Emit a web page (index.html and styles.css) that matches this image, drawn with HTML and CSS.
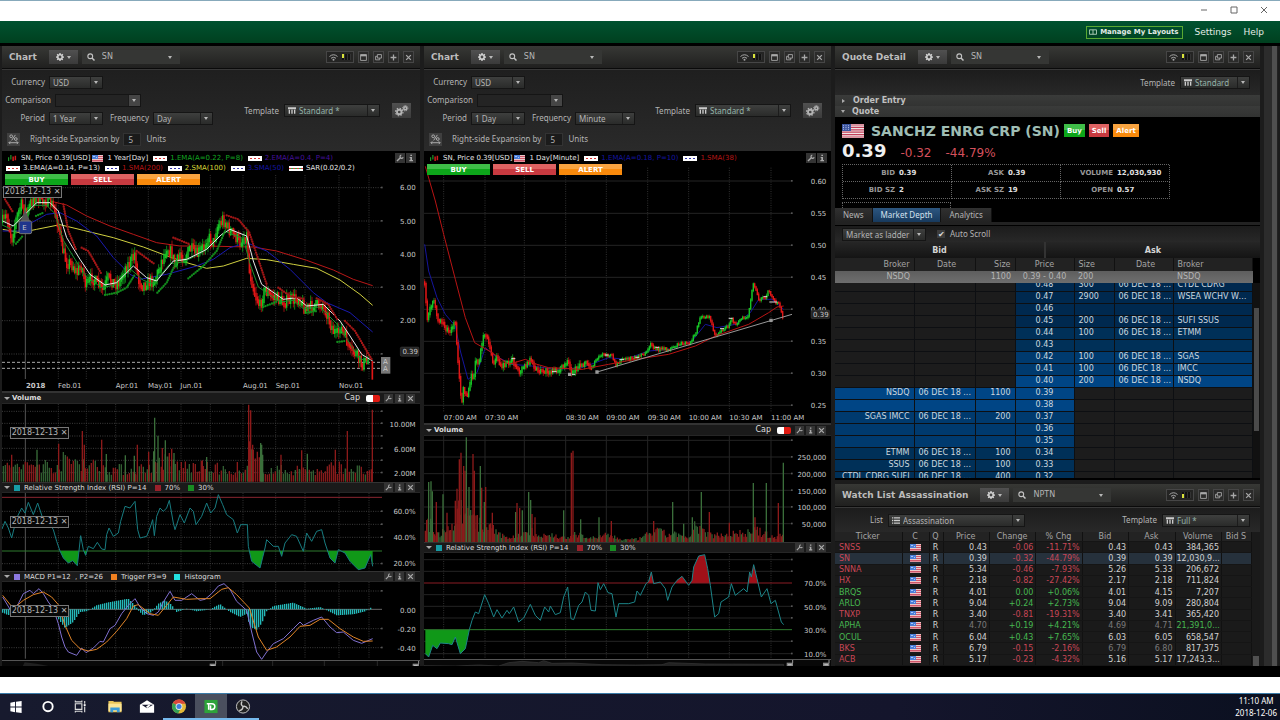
FILE: index.html
```html
<!DOCTYPE html>
<html lang="en">
  <head>
    <meta charset="utf-8">
    <title>Advanced Dashboard</title>
    <link rel="stylesheet" href="styles.css">
  </head>

  <body>
    <svg class="defs">
      <symbol id="i-gear" viewBox="0 0 16 16"><path fill="currentColor" fill-rule="evenodd" d="M6.8 0h2.4l.4 2.2 1.6.7L13 1.6 14.6 3.3l-1.3 1.8.6 1.5 2.1.4v2.3l-2.1.4-.7 1.6 1.3 1.8-1.7 1.6-1.7-1.2-1.6.6L9.200 16H6.800l-.4-1.900-1.600-.6L3 14.700 1.400 13.100l1.200-1.800-.6-1.600L0 9.300V7l2.100-.4.600-1.500L1.400 3.300 3 1.600l1.800 1.300 1.600-.7zM8 5.200a2.800 2.800 0 1 0 0 5.600 2.800 2.800 0 0 0 0-5.600z"/></symbol>
      <symbol id="i-search" viewBox="0 0 16 16"><g fill="none" stroke="currentColor" stroke-width="2.200"><circle cx="6.500" cy="6.500" r="4.800"/><path d="M10 10l5 5" stroke-width="3"/></g></symbol>
      <symbol id="i-wifi" viewBox="0 0 18 14"><g fill="none" stroke="currentColor" stroke-width="2"><path d="M1 5q8-7 16 0M4 8.500q5-4 10 0"/></g><circle cx="9" cy="11.500" r="2" fill="currentColor"/></symbol>
      <symbol id="i-min" viewBox="0 0 12 12"><path fill="none" stroke="currentColor" stroke-width="1.500" d="M1 1h10v10H1z"/><path fill="currentColor" d="M1 1h10v3H1z"/></symbol>
      <symbol id="i-pop" viewBox="0 0 12 12"><path fill="none" stroke="currentColor" stroke-width="1.500" d="M4 1h7v6H4zM4 4H1v6h7V7"/></symbol>
      <symbol id="i-plus" viewBox="0 0 12 12"><path fill="none" stroke="currentColor" stroke-width="2.200" d="M6 1v10M1 6h10"/></symbol>
      <symbol id="i-close" viewBox="0 0 12 12"><path fill="none" stroke="currentColor" stroke-width="2.200" d="M2 2l8 8M10 2l-8 8"/></symbol>
      <symbol id="i-gears" viewBox="0 0 20 16"><g fill="none" stroke="currentColor"><circle cx="7" cy="10" r="3" stroke-width="2.500"/><circle cx="7" cy="10" r="5" stroke-width="1.500" stroke-dasharray="2 1.900"/><circle cx="15" cy="5" r="2" stroke-width="2"/><circle cx="15" cy="5" r="3.500" stroke-width="1.300" stroke-dasharray="1.500 1.200"/></g></symbol>
      <symbol id="i-cols" viewBox="0 0 12 10"><path fill="currentColor" d="M0 0h12v3H0zM1 4h2v6H1zM5 4h2v6H5zM9 4h2v6H9z"/></symbol>
      <symbol id="i-list" viewBox="0 0 12 10"><path fill="currentColor" d="M0 0h2v2H0zM3 0h9v2H3zM0 4h2v2H0zM3 4h9v2H3zM0 8h2v2H0zM3 8h9v2H3z"/></symbol>
      <symbol id="i-pct" viewBox="0 0 12 12"><g fill="none" stroke="currentColor"><circle cx="3.500" cy="2.500" r="1.500"/><circle cx="8.500" cy="5.500" r="1.500"/><path d="M8 1L4 7M1 9.500h10M2.500 8L1 9.500 2.500 11M9.500 8L11 9.500 9.500 11"/></g></symbol>
      <symbol id="i-wrench" viewBox="0 0 12 12"><path fill="none" stroke="currentColor" stroke-width="2" d="M1.500 10.500l5-5"/><path fill="none" stroke="currentColor" stroke-width="1.800" d="M8 1.500a2.500 2.500 0 1 0 2.800 3.500"/></symbol>
      <symbol id="i-info" viewBox="0 0 12 12"><path fill="currentColor" d="M5 1h2.500v2H5zM4 4.500h3.500V9H9v2H3.500V9H5V6H4z"/></symbol>
      <symbol id="i-candle" viewBox="0 0 12 8"><path fill="none" stroke="#1e9d2a" stroke-width="1.500" d="M1.500 3v5M4.500 0v6"/><path fill="none" stroke="#d01c1c" stroke-width="2" d="M7.500 2v6M10.500 1v6"/></symbol>
      <symbol id="flag" viewBox="0 0 22 14" preserveAspectRatio="none"><path fill="#f1e6e6" d="M0 0h22v14H0z"/><path stroke="#c2405a" stroke-width="1.200" d="M0 1h22M0 3.400h22M0 5.800h22M0 8.200h22M0 10.600h22M0 13h22"/><path fill="#3b55a0" d="M0 0h9v7H0z"/><path stroke="#c8d2f0" stroke-width=".8" stroke-dasharray="1 1.500" d="M1 1.700h7M1 3.500h7M1 5.300h7"/></symbol>
      <symbol id="flag-sm" viewBox="0 0 11 7" preserveAspectRatio="none"><path fill="#eccaca" d="M0 0h11v7H0z"/><path stroke="#d0566a" d="M0 1.500h11M0 3.500h11M0 5.500h11M0 7h11"/><path fill="#4c7fd8" d="M0 0h6v4H0z"/><path fill="#a8c8f8" d="M1 1h2v1H1zM4 2h1v1H4z"/></symbol>
    </svg>

    <div class="titlebar">
      <button aria-label="Minimize"><svg viewBox="0 0 8 8"><path d="M1 4h6"/></svg></button>
      <button aria-label="Maximize"><svg viewBox="0 0 8 8"><path d="M1 1h6v6H1z"/></svg></button>
      <button aria-label="Close"><svg viewBox="0 0 8 8"><path d="M1 1l6 6M7 1l-6 6"/></svg></button>
    </div>
    <nav class="menubar">
      <a class="layouts" href="#"><svg viewBox="0 0 9 7"><path d="M.5.5h8v5h-8zM4.500.5v5"/></svg>Manage My Layouts</a>
      <a href="#">Settings</a>
      <a href="#">Help</a>
    </nav>

    <main class="desk">
      <section class="panel">
        <header class="panel-head">
          <h2>Chart</h2>
          <button class="gear" aria-label="Chart settings"><svg><use href="#i-gear"/></svg></button>
          <label class="search"><svg><use href="#i-search"/></svg><input value="SN" aria-label="Symbol"></label>
          <div class="tools"></div>
        </header>
        <div class="settings">
          <div class="fields">
            <div class="field"><label for="cur1">Currency</label><span class="sel w52"><select id="cur1"><option>USD</option></select></span></div>
            <div class="field"><label class="wide" for="cmp1">Comparison</label><span class="sel combo w85"><input id="cmp1"></span></div>
            <div class="field"><label for="per1">Period</label><span class="sel w52"><select id="per1"><option>1 Year</option></select></span>
              <label class="freq" for="frq1">Frequency</label><span class="sel w60"><select id="frq1"><option>Day</option></select></span></div>
            <div class="field expand"><button class="pct" aria-label="Expansion mode"><svg><use href="#i-pct"/></svg></button><label for="exp1">Right-side Expansion by</label><input id="exp1" value="5"><span>Units</span></div>
          </div>
          <label for="tpl1">Template</label>
          <span class="sel tpl w96"><svg><use href="#i-cols"/></svg><select id="tpl1"><option>Standard *</option></select></span>
          <button class="gears" aria-label="Template options"><svg><use href="#i-gears"/></svg></button>
        </div>
        <div class="chart">
          <div class="legend">
            <svg class="cndl"><use href="#i-candle"/></svg><span>SN, Price 0.39[USD]</span><svg class="flag"><use href="#flag-sm"/></svg><span>1 Year[Day]</span>
            <i class="sw red"></i><span class="c-green">1.EMA(A=0.22, P=8)</span>
            <i class="sw red"></i><span class="c-violet">2.EMA(A=0.4, P=4)</span>
            <span class="mini"><button aria-label="Edit"><svg><use href="#i-wrench"/></svg></button><button aria-label="Info"><svg><use href="#i-info"/></svg></button></span>
          </div>
          <div class="legend second">
            <i class="sw red"></i><span>3.EMA(A=0.14, P=13)</span>
            <i class="sw blue"></i><span class="c-red">1.SMA(200)</span>
            <i class="sw blue"></i><span class="c-yellow">2.SMA(100)</span>
            <i class="sw blue"></i><span class="c-blue">3.SMA(50)</span>
            <i class="sw mix"></i><span>SAR(0.02/0.2)</span>
          </div>
          <div class="plot">
            <svg id="price1" viewBox="6 -21 1254 651"></svg>
            <div class="orders"><button class="buy">BUY</button><button class="sell">SELL</button><button class="alert">ALERT</button></div>
            <button class="date top">2018-12-13 ✕</button>
          </div>
        </div>
        <div class="sub-head"><b class="tri"></b><strong>Volume</strong><span class="cap">Cap <i></i></span><span class="mini3"></span></div>
        <div class="plot"><svg id="vol1" viewBox="6 43 1254 234"></svg><button class="date">2018-12-13 ✕</button></div>
        <div class="sub-head"><b class="tri"></b><i class="key teal"></i>Relative Strength Index (RSI) P=14<i class="key dred"></i>70%<i class="key dgreen"></i>30%<span class="mini3"></span></div>
        <div class="plot"><svg id="rsi1" viewBox="6 0 1254 234"></svg><button class="date">2018-12-13 ✕</button></div>
        <div class="sub-head"><b class="tri"></b><i class="key purple"></i>MACD P1=12 &nbsp;, P2=26<i class="key orange"></i>Trigger P3=9<i class="key cyan"></i>Histogram<span class="mini3"></span></div>
        <div class="plot"><svg id="macd1" viewBox="6 0 1254 234"></svg><button class="date">2018-12-13 ✕</button></div>
        <div class="overview"><svg id="over1" viewBox="6 0 1254 24"></svg></div>
      </section>

      <section class="panel">
        <header class="panel-head">
          <h2>Chart</h2>
          <button class="gear" aria-label="Chart settings"><svg><use href="#i-gear"/></svg></button>
          <label class="search"><svg><use href="#i-search"/></svg><input value="SN" aria-label="Symbol"></label>
          <div class="tools"></div>
        </header>
        <div class="settings">
          <div class="fields">
            <div class="field"><label for="cur2">Currency</label><span class="sel w52"><select id="cur2"><option>USD</option></select></span></div>
            <div class="field"><label class="wide" for="cmp2">Comparison</label><span class="sel combo w85"><input id="cmp2"></span></div>
            <div class="field"><label for="per2">Period</label><span class="sel w52"><select id="per2"><option>1 Day</option></select></span>
              <label class="freq" for="frq2">Frequency</label><span class="sel w60"><select id="frq2"><option>Minute</option></select></span></div>
            <div class="field expand"><button class="pct" aria-label="Expansion mode"><svg><use href="#i-pct"/></svg></button><label for="exp2">Right-side Expansion by</label><input id="exp2" value="5"><span>Units</span></div>
          </div>
          <label for="tpl2">Template</label>
          <span class="sel tpl w96"><svg><use href="#i-cols"/></svg><select id="tpl2"><option>Standard *</option></select></span>
          <button class="gears" aria-label="Template options"><svg><use href="#i-gears"/></svg></button>
        </div>
        <div class="chart">
          <div class="legend">
            <svg class="cndl"><use href="#i-candle"/></svg><span>SN, Price 0.39[USD]</span><svg class="flag"><use href="#flag-sm"/></svg><span>1 Day[Minute]</span>
            <i class="sw red"></i><span class="c-blue">1.EMA(A=0.18, P=10)</span>
            <i class="sw blue"></i><span class="c-red">1.SMA(38)</span>
            <span class="mini"><button aria-label="Edit"><svg><use href="#i-wrench"/></svg></button><button aria-label="Info"><svg><use href="#i-info"/></svg></button></span>
          </div>
          <div class="plot">
            <svg id="price2" viewBox="6 -111 1221 777"></svg>
            <div class="orders"><button class="buy">BUY</button><button class="sell">SELL</button><button class="alert">ALERT</button></div>
          </div>
        </div>
        <div class="sub-head"><b class="tri"></b><strong>Volume</strong><span class="cap">Cap <i></i></span><span class="mini3"></span></div>
        <div class="plot"><svg id="vol2" viewBox="6 42 1221 318"></svg></div>
        <div class="sub-head"><b class="tri"></b><i class="key teal"></i>Relative Strength Index (RSI) P=14<i class="key dred"></i>70%<i class="key dgreen"></i>30%<span class="mini3"></span></div>
        <div class="plot"><svg id="rsi2" viewBox="6 33 1221 318"></svg></div>
        <div class="overview"><svg id="over2" viewBox="6 0 1221 24"></svg></div>
      </section>

      <div class="side">
        <section class="panel quote">
          <header class="panel-head">
            <h2>Quote Detail</h2>
            <button class="gear" aria-label="Quote settings"><svg><use href="#i-gear"/></svg></button>
            <label class="search"><svg><use href="#i-search"/></svg><input value="SN" aria-label="Symbol"></label>
            <div class="tools"></div>
          </header>
          <div class="bar end">
            <label for="tpl3">Template</label>
            <span class="sel tpl w70"><svg><use href="#i-cols"/></svg><select id="tpl3"><option>Standard</option></select></span>
          </div>
          <h3 class="fold closed">Order Entry</h3>
          <h3 class="fold">Quote</h3>
          <div class="quote-body">
            <div class="name"><svg><use href="#flag"/></svg><h1>SANCHZ ENRG CRP (SN)</h1>
              <button class="buy">Buy</button><button class="sell">Sell</button><button class="alert">Alert</button></div>
            <div class="last"><strong>0.39</strong><span>-0.32</span><span>-44.79%</span></div>
            <dl class="facts">
              <div><dt>BID</dt><dd>0.39</dd></div><div><dt>ASK</dt><dd>0.39</dd></div><div><dt>VOLUME</dt><dd>12,030,930</dd></div>
              <div><dt>BID SZ</dt><dd>2</dd></div><div><dt>ASK SZ</dt><dd>19</dd></div><div><dt>OPEN</dt><dd>0.57</dd></div>
            </dl>
            <div class="more"></div>
            <div class="tabs"><button>News</button><button class="on">Market Depth</button><button>Analytics</button></div>
          </div>
          <div class="bar depth-bar">
            <span class="sel w83"><select aria-label="Depth view"><option>Market as ladder</option></select></span>
            <label><input type="checkbox" checked>Auto Scroll</label>
          </div>
          <div class="ladder">
            <div class="sides"><b>Bid</b><b>Ask</b></div>
            <table class="ladder-head"><thead><tr><th>Broker</th><th>Date</th><th>Size</th><th>Price</th><th>Size</th><th>Date</th><th>Broker</th></tr></thead>
              <tbody><tr class="best"><td>NSDQ</td><td></td><td>1100</td><td>0.39 - 0.40</td><td>200</td><td></td><td>NSDQ</td></tr></tbody></table>
            <div class="ladder-scroll"><table><tbody id="ladder"></tbody></table></div>
          </div>
        </section>

        <section class="panel watch">
          <header class="panel-head">
            <h2>Watch List Assassination</h2>
            <button class="gear" aria-label="Watch list settings"><svg><use href="#i-gear"/></svg></button>
            <label class="search"><svg><use href="#i-search"/></svg><input value="NPTN" aria-label="Symbol"></label>
            <div class="tools low"></div>
          </header>
          <div class="bar list-bar">
            <label for="list">List</label>
            <span class="sel tpl plain w137"><svg><use href="#i-list"/></svg><select id="list"><option>Assassination</option></select></span>
            <label class="push" for="tpl4">Template</label>
            <span class="sel tpl w88"><svg><use href="#i-cols"/></svg><select id="tpl4"><option>Full *</option></select></span>
          </div>
          <div class="watch-scroll">
            <table>
              <thead><tr><th>Ticker</th><th>C</th><th>Q</th><th>Price</th><th>Change</th><th>% Chg</th><th>Bid</th><th>Ask</th><th>Volume</th><th>Bid S</th></tr></thead>
              <tbody id="watch"></tbody>
            </table>
          </div>
        </section>
      </div>
      <div class="gutter"></div>
    </main>

    <div class="strip"></div>
    <footer class="taskbar">
      <button aria-label="Start"><svg viewBox="0 0 16 16"><path fill="#fff" d="M2 4l5-1v5H2zM8 2.800L14 2v6H8zM2 9h5v5l-5-1zM8 9h6v6l-6-1z"/></svg></button>
      <button aria-label="Cortana"><svg viewBox="0 0 16 16"><circle cx="8" cy="8" r="5" fill="none" stroke="#fff" stroke-width="2"/></svg></button>
      <button aria-label="Task view"><svg viewBox="0 0 16 16"><path fill="none" stroke="#ddd" stroke-width="1.200" d="M3 5h7v6H3zM3 1.500V3h7V1.500M3 14.500V13h7v1.500M13 2v3M13 8v6"/><path fill="#fff" d="M12 5.500h2v2h-2z"/></svg></button>
      <button class="first-app" aria-label="Explorer"><svg viewBox="0 0 16 16"><path fill="#e8c65a" d="M1 2h5l1 1h8v11H1z"/><path fill="#fbe596" d="M1 5h14v8H1z"/><path fill="#3a9bd8" d="M3 14V9h10v5h-3v-2H6v2z"/></svg></button>
      <button aria-label="Mail"><svg viewBox="0 0 18 16"><path fill="#fff" d="M1 6l8-5 8 5v9H1z"/><path fill="#15172c" d="M3 6h13l-7 4z"/><path fill="#fff" d="M8 8l3-2 2 1-4 3z"/></svg></button>
      <button class="run" aria-label="Chrome"><svg viewBox="0 0 16 16"><circle cx="8" cy="8" r="7.500" fill="#e2b93a"/><path fill="#d9473c" d="M8 8L1.500 4.300A7.500 7.500 0 0 1 14.800 5H8z"/><path fill="#35a155" d="M8 8L1.500 4.300A7.500 7.500 0 0 0 7 15.400L10.500 9z"/><circle cx="8" cy="8" r="3.600" fill="#eee"/><circle cx="8" cy="8" r="2.700" fill="#3d7ee0"/></svg></button>
      <button class="run on" aria-label="TD"><svg viewBox="0 0 16 16"><path fill="#2ea33a" d="M1 1h14v14H1z"/><path fill="none" stroke="#fff" stroke-width="1.600" d="M3.500 5H9a3 3 0 0 1 0 6.200H7.500V7M5.500 5v6.500"/></svg></button>
      <button class="run" aria-label="OBS"><svg viewBox="0 0 16 16"><circle cx="8" cy="8" r="7" fill="#222" stroke="#ccc"/><path fill="none" stroke="#ccc" stroke-width="1.500" d="M8 8Q5 6 7 2.500M8 8q3-1 5 2.500M8 8q0 3.500-4 4.500"/></svg></button>
      <time>11:10 AM<br>2018-12-06</time>
    </footer>

    <script src="charts.js"></script>
  </body>
</html>
```
FILE: styles.css
```css
* {
  box-sizing: border-box;
}
body {
  margin: 0;
  height: 100vh;
  display: flex;
  flex-direction: column;
  overflow: hidden;
  background: #000;
  color: #b4b4b4;
  font: 8px/10px "DejaVu Sans", sans-serif;
}
.defs {
  display: none;
}
svg {
  display: block;
  flex: none;
}
button, input, select {
  font: inherit;
  color: inherit;
  margin: 0;
  padding: 0;
  border: 0;
  background: none;
  border-radius: 0;
  min-width: 0;
}
h1, h2, h3, dl, dd {
  margin: 0;
  font-size: inherit;
}
a {
  color: #e4ece6;
  text-decoration: none;
}
table {
  width: 100%;
  border-collapse: collapse;
  table-layout: fixed;
}

/* window chrome */
.titlebar {
  height: 21px;
  display: flex;
  justify-content: flex-end;
  gap: 22px;
  padding: 0 12px 2px 0;
  background: #fff;
  border-top: 1px solid #87a9bb;
}
.titlebar svg {
  width: 8px;
  height: 8px;
  fill: none;
  stroke: #666;
}
.menubar {
  height: 22px;
  display: flex;
  align-items: center;
  justify-content: flex-end;
  gap: 12px;
  padding-right: 16px;
  background: linear-gradient(#005230, #00401f);
  font-size: 9px;
}
.menubar .layouts {
  display: flex;
  align-items: center;
  gap: 3px;
  height: 13px;
  padding: 0 3px 0 2px;
  border: 1px solid #5aa832;
  font-size: 7px;
  font-weight: bold;
}
.layouts svg {
  width: 8px;
  height: 7px;
  fill: none;
  stroke: #b8d4c0;
}

.desk {
  flex: 1;
  min-height: 0;
  display: grid;
  grid-template-columns: 418fr 407fr 425fr 14px;
  column-gap: 4px;
  padding: 0 2px;
  background: #1c1c1c;
  border-top: 3px solid #000;
  border-bottom: 11px solid #000;
}
.panel {
  min-width: 0;
  min-height: 0;
  overflow: hidden;
  display: flex;
  flex-direction: column;
  background: #000;
}
.panel-head {
  flex: none;
  height: 23px;
  display: flex;
  align-items: center;
  padding: 0 6px 0 7px;
  background: linear-gradient(#373835, #20201f);
  border-bottom: 1px solid #0a0a0a;
}
.panel-head h2 {
  font-size: 9px;
  color: #bcbcbc;
  white-space: nowrap;
}
.gear {
  display: flex;
  align-items: center;
  justify-content: center;
  gap: 3px;
  width: 29px;
  height: 14px;
  margin: 0 4px 0 12px;
  background: linear-gradient(#505050, #3a3a3a);
  color: #d0d0d0;
}
.gear svg {
  width: 8px;
  height: 8px;
}
.gear::after, .search::after, .sel::after {
  content: "";
  border: 2px solid transparent;
  border-top: 3px solid #b8b8b8;
  border-bottom: 0;
}
.search {
  display: flex;
  align-items: center;
  width: 98px;
  height: 14px;
  padding: 0 8px 0 5px;
  background: #353634;
}
.search svg {
  width: 8px;
  height: 8px;
  margin-right: 7px;
  color: #c4c4c4;
}
.search input {
  flex: 1;
}
.tools {
  display: flex;
  gap: 4px;
  margin-left: auto;
  color: #a8a8a8;
}
.tools button {
  display: flex;
  align-items: center;
  justify-content: center;
  width: 11px;
  height: 12px;
  background: #2b2b2a;
  border: 1px solid #464646;
}
.tools .net {
  width: 28px;
  gap: 4px;
  background: #242423;
}
.tools svg {
  width: 7px;
  height: 7px;
}
.tools .net svg {
  width: 9px;
}
.net i {
  width: 9px;
  height: 6px;
  background: linear-gradient(#d9e23a, #d9e23a) 0 0 / 2px 4px no-repeat, repeating-linear-gradient(90deg, #111 0 2px, #333 2px 3px);
}
.low .net i {
  background-position: 0 100%, 0 0;
}

/* chart settings */
.settings {
  flex: none;
  display: flex;
  align-items: center;
  padding: 6px 9px 6px 0;
  background: linear-gradient(#1f1f1f, #2a2a2a);
  border-top: 1px solid #383838;
  font-family: "Noto Sans", sans-serif;
}
.fields {
  flex: 1;
  display: flex;
  flex-direction: column;
  gap: 6px;
}
.field {
  display: flex;
  align-items: center;
  height: 12px;
}
.field label {
  width: 47px;
  padding-right: 4px;
  text-align: right;
}
.field label.wide {
  width: 53px;
}
.field label.freq {
  width: 50px;
}
.expand {
  margin-top: 3px;
}
.field.expand label {
  width: auto;
}
.expand input {
  width: 18px;
  height: 13px;
  padding-left: 4px;
  margin-right: 5px;
  background: #1b1b1b;
  border: 1px solid #333;
}
.pct {
  margin: 0 10px 0 5px;
  padding: 1px;
  background: #3f3f3f;
}
.pct svg {
  width: 11px;
  height: 11px;
}
.sel {
  position: relative;
  display: flex;
  align-items: center;
  height: 13px;
  background: linear-gradient(#3e3f3e, #2a2b2a);
  border: 1px solid #151515;
  font-family: "Noto Sans", sans-serif;
}
.sel select, .sel input {
  flex: 1;
  height: 11px;
  appearance: none;
  padding: 0 12px 0 3px;
  line-height: 11px;
  outline: 0;
}
.sel::after {
  position: absolute;
  right: 4px;
  pointer-events: none;
}
.sel::before {
  content: "";
  position: absolute;
  right: 11px;
  width: 1px;
  height: 100%;
  background: #1c1c1c;
}
.combo {
  background: linear-gradient(90deg, #242424 72px, #454545 72px);
}
.settings > label {
  margin-right: 5px;
}
.tpl select {
  color: #94b2a8;
}
.plain select {
  color: inherit;
}
.tpl svg {
  width: 8px;
  height: 7px;
  margin-left: 3px;
  color: #ccc;
}
.w52 { width: 54px; }
.w60 { width: 60px; }
.w70 { width: 70px; }
.w83 { width: 84px; }
.w85 { width: 86px; }
.w88 { width: 88px; }
.w96 { width: 96px; }
.w137 { width: 137px; }
.gears {
  width: 19px;
  height: 15px;
  margin-left: 12px;
  padding: 1px 2px;
  background: linear-gradient(#505050, #3c3c3c);
}
.gears svg {
  width: 15px;
  height: 13px;
}

/* charts */
.chart {
  padding-top: 2px;
}
.legend {
  display: flex;
  align-items: center;
  height: 10px;
  padding: 0 4px;
  font-size: 7px;
  color: #e6e6e6;
  white-space: nowrap;
}
.cndl {
  width: 12px;
  height: 6px;
  margin-right: 3px;
}
.flag {
  width: 11px;
  height: 7px;
  margin: 0 4px 0 2px;
}
.sw {
  flex: none;
  width: 14px;
  height: 5px;
  margin: 0 3px 0 5px;
  background: linear-gradient(#fff 2px, transparent 2px 3px, #fff 3px), repeating-linear-gradient(90deg, #fff 0 2px, #d33 2px 4px);
}
.sw.blue {
  background: linear-gradient(#fff 2px, transparent 2px 3px, #fff 3px), repeating-linear-gradient(90deg, #fff 0 2px, #33a 2px 4px);
}
.sw.mix {
  background: linear-gradient(#fff 2px, transparent 2px 3px, #fff 3px), repeating-linear-gradient(90deg, #d33 0 2px, #2a4 2px 4px);
}
.second .sw:first-child {
  margin-left: 0;
}
.c-green { color: #12a820; }
.c-violet { color: #45109c; }
.c-red { color: #b81414; }
.c-yellow { color: #d8d838; }
.c-blue { color: #1414a0; }
.mini {
  display: flex;
  gap: 1px;
  margin-left: auto;
}
.mini3 {
  display: flex;
  gap: 2px;
  margin-left: auto;
}
.mini button, .mini3 button {
  width: 10px;
  height: 10px;
  padding: 1px;
  background: #343434;
  color: #aaa;
}
.mini3 button {
  width: 9px;
  height: 9px;
}
.mini svg {
  width: 8px;
  height: 8px;
}
.mini3 svg {
  width: 7px;
  height: 7px;
}
.plot {
  position: relative;
}
.chart .plot {
  margin-top: 1px;
}
.plot > svg, .overview svg {
  width: 100%;
}
.orders {
  position: absolute;
  top: 0;
  left: 3px;
  display: flex;
  gap: 3px;
}
.orders button {
  width: 63px;
  height: 11px;
  color: #fff;
  font-size: 7px;
  font-weight: bold;
}
.buy { background: linear-gradient(#3fbd48 50%, #0da61a 50%); }
.sell { background: linear-gradient(#de6262 50%, #c83a40 50%); }
.alert { background: linear-gradient(#f9a440 50%, #f98a0c 50%); }
.date {
  position: absolute;
  top: 23px;
  left: 8px;
  height: 12px;
  width: 59px;
  background: #080808;
  border: 1px solid #777;
  font-size: 8px;
  line-height: 8px;
  white-space: nowrap;
}
.date.top {
  top: 12px;
  left: 1px;
}
.sub-head {
  flex: none;
  display: flex;
  align-items: center;
  height: 11px;
  padding: 0 5px 0 2px;
  background: #1a1a1a;
  border-top: 1px solid #333;
  border-bottom: 1px solid #262626;
  color: #ddd;
  font-size: 7px;
  white-space: nowrap;
}
.chart + .sub-head {
  height: 13px;
  border-top-width: 2px;
}
.tri {
  margin-right: 2px;
  border: 3px solid transparent;
  border-top-color: #aaa;
  border-bottom: 0;
}
.key {
  width: 6px;
  height: 6px;
  margin: 0 4px 0 8px;
}
.tri + .key {
  margin-left: 2px;
}
.teal { background: #169ba5; }
.dred { background: #99202a; }
.dgreen { background: #188c22; }
.purple { background: #8b78e0; }
.orange { background: #f08020; }
.cyan { background: #22e0e0; }
.cap {
  display: flex;
  align-items: center;
  gap: 6px;
  margin-left: auto;
  font-size: 8px;
}
.cap i {
  width: 14px;
  height: 7px;
  border-radius: 2px;
  background: linear-gradient(90deg, #fff 50%, #e01a12 50%);
}
.cap + .mini3 {
  margin-left: 4px;
}
.overview {
  flex: 1;
  border-top: 1px solid #555;
  background: #080808;
}

/* svg parts */
.plot text {
  font: 21px "DejaVu Sans", sans-serif;
  fill: #c8c8c8;
}
.plot .year {
  font-weight: bold;
}
.h, .v {
  stroke: #3c3c3c;
  stroke-width: 3;
  stroke-dasharray: 3 4;
}
.v {
  stroke: #303030;
}
.solid {
  stroke: #242424;
  stroke-dasharray: none;
}
.line {
  fill: none;
  stroke-width: 3;
}
.sar {
  fill: none;
  stroke-width: 7;
  stroke-linecap: round;
  stroke-dasharray: 0 7;
}
.tag {
  fill: #242424;
  stroke: #555;
}

/* quote */
.side {
  display: flex;
  flex-direction: column;
  gap: 4px;
  min-height: 0;
  min-width: 0;
}
.quote {
  flex: 434;
}
.watch {
  flex: 182;
}
.bar {
  flex: none;
  display: flex;
  align-items: center;
  height: 26px;
  padding: 0 10px;
  background: linear-gradient(#1c1c1c, #282828);
  border-top: 1px solid #383838;
  font-family: "Noto Sans", sans-serif;
}
.end {
  justify-content: flex-end;
}
.bar > label {
  margin-right: 5px;
}
.fold {
  flex: none;
  display: flex;
  align-items: center;
  height: 11px;
  padding-left: 6px;
  background: linear-gradient(#3a3b3a, #323332);
  color: #c0c0c0;
}
.fold::before {
  content: "";
  margin-right: 7px;
  border: 2px solid transparent;
  border-top: 3px solid #aaa;
  border-bottom: 0;
}
.closed::before {
  margin: 0 8px 0 1px;
  border: 2px solid transparent;
  border-left: 3px solid #aaa;
  border-right: 0;
}
.quote-body {
  flex: none;
}
.name {
  display: flex;
  align-items: center;
  gap: 4px;
  padding: 4px 7px 0;
  height: 23px;
}
.name svg {
  width: 22px;
  height: 14px;
  margin-right: 3px;
}
.name h1 {
  font-size: 14px;
  line-height: 18px;
  color: #9fbdb4;
  white-space: nowrap;
}
.name button {
  height: 13px;
  padding: 0 3px;
  color: #fff;
  font-weight: bold;
  font-size: 7px;
}
.last {
  display: flex;
  align-items: baseline;
  gap: 14px;
  padding: 0 7px;
  height: 24px;
  line-height: 22px;
  font-size: 12px;
  color: #d4505c;
}
.last strong {
  font-size: 18px;
  color: #f0f0f0;
}
.facts {
  display: grid;
  grid-template-columns: repeat(3, 109px);
  margin-left: 7px;
  border: 1px dotted #666;
  border-width: 1px 0 0 1px;
  width: 327px;
  font-size: 7px;
  font-weight: bold;
}
.facts div {
  display: grid;
  grid-template-columns: 1fr 1fr;
  gap: 4px;
  height: 17px;
  align-items: center;
  border: 1px dotted #666;
  border-width: 0 1px 1px 0;
}
.facts dt {
  text-align: right;
  color: #999;
}
.facts dd {
  color: #e0e0e0;
}
.more {
  width: 109px;
  height: 6px;
  margin: 3px 0 0 7px;
  border: 1px dotted #666;
  border-bottom: 0;
}
.tabs {
  display: flex;
  align-items: flex-end;
  border-bottom: 3px solid #222;
  font-family: "Noto Sans", sans-serif;
}
.tabs button {
  height: 14px;
  padding: 0 8px;
  background: linear-gradient(#303030, #222);
  border-right: 1px solid #111;
}
.tabs .on {
  background: linear-gradient(#2c5680, #173a5e);
  color: #d5e2ee;
}
.depth-bar {
  height: 17px;
  padding: 0 7px;
  border-color: #000;
}
.depth-bar label {
  display: flex;
  align-items: center;
  gap: 5px;
  margin-left: 11px;
}
.depth-bar [type=checkbox] {
  appearance: none;
  width: 8px;
  height: 8px;
  background: #3c3c3c;
  line-height: 8px;
  text-align: center;
}
.depth-bar [type=checkbox]:checked::before {
  content: "✔";
  color: #ddd;
}
.ladder {
  flex: 1;
  min-height: 0;
  display: flex;
  flex-direction: column;
}
.sides {
  display: grid;
  grid-template-columns: 209fr 216fr;
  height: 16px;
  line-height: 17px;
  text-align: center;
  color: #d4d4d4;
  background: linear-gradient(#262626, #141414);
}
.sides b + b {
  border-left: 2px solid #333;
}
.ladder table {
  width: calc(100% - 7px);
}
.ladder th, .ladder td {
  height: 12px;
  padding: 0 4px;
  font-weight: normal;
  text-align: left;
  white-space: nowrap;
  overflow: hidden;
  text-overflow: ellipsis;
}
.ladder th {
  height: 13px;
  background: #222;
  border-right: 1px solid #111;
  color: #a4a4a4;
}
.ladder tr > :nth-child(1) { width: 79px; text-align: right; }
.ladder tr > :nth-child(2) { width: 61px; padding: 0 0 0 4px; }
.ladder tr > :nth-child(3) { width: 40px; text-align: right; }
.ladder tr > :nth-child(4) { width: 59px; text-align: center; }
.ladder tr > :nth-child(5) { width: 40px; }
.ladder tr > :nth-child(6) { width: 59px; padding: 0 0 0 4px; }
.ladder th:nth-child(2), .ladder th:nth-child(6) { text-align: center !important; }
.best {
  background: linear-gradient(#5e5e5e, #6e6e6e);
  color: #b4b4b4;
}
.ladder-scroll {
  flex: 1;
  min-height: 0;
  overflow: hidden;
  border-bottom: 2px solid #000;
  background: linear-gradient(90deg, #1a1a1a calc(100% - 7px), #111 calc(100% - 7px));
  position: relative;
}
.ladder-scroll::after {
  content: "";
  position: absolute;
  right: 1px;
  top: 13%;
  bottom: 24%;
  width: 5px;
  background: #4a4a4a;
}
.ladder-scroll table {
  margin-top: -4px;
}
.ladder-scroll td {
  border: 1px solid #0d0f12;
  border-width: 0 1px 1px 0;
  background: #1c1c1c;
  color: #ccd6de;
}
.ladder-scroll .d1 { background: #00294f; }
.ladder-scroll .d2 { background: #003058; }
.ladder-scroll .d3 { background: #003a6e; }
.ladder-scroll .d4 { background: #004585; }

/* watch list */
.list-bar {
  height: 25px;
  padding-left: 35px;
}
.push {
  margin-left: auto;
}
.watch-scroll {
  flex: 1;
  min-height: 0;
  overflow: hidden;
  padding-right: 8px;
  background: linear-gradient(#505050, #505050) right 1px bottom / 6px 10px no-repeat #1a1a1a;
}
.watch table {
  height: 100%;
}
.watch th, .watch td {
  padding: 0 2px 0 1px;
  font-weight: normal;
  line-height: 9px;
  text-align: right;
  white-space: nowrap;
  overflow: hidden;
  border-right: 1px solid #111;
  border-bottom: 1px solid #151515;
  color: #d0d0d0;
}
.watch th {
  text-align: center;
  background: #232323;
  color: #a4a4a4;
}
.watch tr > :nth-child(1) { width: 67px; }
.watch tr > :nth-child(2) { width: 27px; }
.watch tr > :nth-child(3) { width: 14px; }
.watch tr > :nth-child(10) { width: 30px; }
.watch td:nth-child(1) { text-align: left; padding-left: 4px; }
.watch td:nth-child(3) { text-align: center; }
.watch td svg {
  width: 11px;
  height: 7px;
  margin: 0 auto;
}
.watch tr.cur td { background: #26313c; }
.watch tr td.up { color: #46b850; }
.watch tr td.down { color: #c84656; }
.watch tr td.dim { color: #7a7a7a; }
.gutter {
  background: linear-gradient(90deg, #2c2c2c 8px, #505050 8px 13px, #222 13px);
}

/* taskbar */
.strip {
  height: 17px;
  background: #fff;
  border-bottom: 1px solid #3a7ba8;
}
.taskbar {
  display: flex;
  align-items: stretch;
  height: 26px;
  background: linear-gradient(90deg, #171a2e, #14152c 70%, #0b1020);
  color: #fff;
  font: 8px/12px "Noto Sans", sans-serif;
}
.taskbar button {
  display: flex;
  align-items: center;
  justify-content: center;
  width: 32px;
  border-bottom: 2px solid transparent;
}
.taskbar .first-app {
  margin-left: 3px;
}
.taskbar svg {
  width: 16px;
  height: 15px;
}
.taskbar .run {
  border-color: #76b9ed;
}
.taskbar .on {
  background: #4a4f5e;
}
.taskbar time {
  margin: 1px 3px 0 auto;
  text-align: center;
}
```
FILE: charts.js
```js
const use = (id) => `<svg><use href="#${id}"/></svg>`;

document.querySelectorAll(".tools").forEach((el) => {
  el.innerHTML =
    `<button class="net" aria-label="Connection">${use("i-wifi")}<i></i></button>` +
    `<button aria-label="Minimize">${use("i-min")}</button>` +
    `<button aria-label="Pop out">${use("i-pop")}</button>` +
    `<button aria-label="Add">${use("i-plus")}</button>` +
    `<button aria-label="Close">${use("i-close")}</button>`;
});
document.querySelectorAll(".mini3").forEach((el) => {
  el.innerHTML =
    `<button aria-label="Edit">${use("i-wrench")}</button>` +
    `<button aria-label="Info">${use("i-info")}</button>` +
    `<button aria-label="Remove">${use("i-close")}</button>`;
});

// small fixed-seed generator so the charts are the same on every load
let seed = 7;
function rnd() {
  seed = (seed * 16807) % 2147483647;
  return seed / 2147483647;
}

function pts(s) {
  return s.split(" ").map((p) => p.split(",").map(Number));
}

function at(list, x) {
  for (let i = 1; i < list.length; i++) {
    let [x0, y0] = list[i - 1];
    let [x1, y1] = list[i];
    if (x <= x1) return y0 + ((y1 - y0) * (x - x0)) / (x1 - x0);
  }
  return list[list.length - 1][1];
}

function line(s, color, cls = "line") {
  return `<polyline class="${cls}" points="${s}" stroke="${color}"/>`;
}

function grid(xs, ys, top, bottom, right, vcls = "", hcls = "") {
  let out = "";
  xs.forEach((x) => (out += `<line class="v ${vcls}" x1="${x}" x2="${x}" y1="${top}" y2="${bottom}"/>`));
  ys.forEach((y) => {
    out += `<line class="h ${hcls}" x1="6" x2="${right}" y1="${y}" y2="${y}"/>`;
    out += `<rect x="${right - 3}" y="${y - 3}" width="5" height="5" fill="#555"/>`;
  });
  return out;
}

function labels(x, list) {
  return list.map(([t, y]) => `<text x="${x}" y="${y + 8}" text-anchor="end">${t}</text>`).join("");
}

function candles(s, jitter, wick, body) {
  let p = pts(s);
  let out = "";
  let prev = p[0][1];
  for (let x = p[0][0]; x <= p[p.length - 1][0]; x += 4) {
    let y = at(p, x) + (rnd() - 0.5) * jitter;
    let c = y < prev ? "#16c224" : "#e01616";
    let lo = Math.min(y, prev) - body;
    let hi = Math.max(y, prev) + body;
    out += `<path stroke="${c}" stroke-width="2" d="M${x} ${lo - rnd() * wick}V${hi + rnd() * wick}"/>`;
    out += `<path stroke="${c}" stroke-width="4" d="M${x} ${lo}V${hi}"/>`;
    prev = y;
  }
  return out;
}

// env: envelope of bar tops, peaks: single tall bars as x,top,color
function bars(env, peaks, base, end, step) {
  let p = pts(env);
  let out = "";
  for (let x = 10; x < end; x += step) {
    let h = (base - at(p, x)) * (0.35 + rnd() * 0.65);
    let c = rnd() < 0.6 ? "#861b1b" : "#315e31";
    out += `<path stroke="${c}" stroke-width="4" d="M${x} ${base}v${-h}"/>`;
  }
  peaks.split(" ").forEach((q) => {
    let [x, y, c] = q.split(",");
    out += `<path stroke="${c == "g" ? "#3a6e3a" : "#8c1a1a"}" stroke-width="4" d="M${x} ${base}V${y}"/>`;
  });
  return out;
}

function area(id, s, y, color, top, bottom) {
  let p = pts(s);
  return `<clipPath id="${id}"><rect x="0" y="${top}" width="1300" height="${bottom - top}"/></clipPath>
    <polygon clip-path="url(#${id})" fill="${color}" points="${p[0][0]},${y} ${s} ${p[p.length - 1][0]},${y}"/>`;
}

function draw(id, html) {
  document.getElementById(id).innerHTML = html;
}

let xs1 = [175, 259, 347, 445, 543, 631, 729, 827, 915, 1017, 1107];
let year = (t, b) => `<path stroke="#555" stroke-width="3" d="M76 ${t}V${b}"/>`;

let close1 = "8,120 20,105 35,175 50,110 65,70 80,100 95,60 110,45 125,60 150,60 165,90 178,150 185,195 200,245 215,250 230,275 245,255 258,315 275,290 290,305 310,325 325,290 345,310 360,300 375,265 390,245 405,220 415,300 430,315 450,300 465,300 480,255 500,205 515,215 525,255 540,220 555,235 570,200 590,220 610,200 625,170 640,185 650,145 668,115 690,150 705,165 720,185 740,165 748,270 765,340 780,375 795,325 810,345 830,350 850,365 875,355 900,355 915,385 940,375 965,370 980,395 995,440 1010,465 1020,440 1035,465 1050,510 1065,515 1085,550 1105,540";
let ema = "8,120 40,135 75,100 110,65 150,65 175,90 200,170 240,235 270,280 315,312 350,305 400,255 440,290 470,300 520,240 560,235 620,205 665,160 690,145 740,165 760,240 785,310 850,355 890,350 920,375 970,370 1020,420 1050,465 1085,520 1118,540";
draw("price1",
  grid(xs1, [20, 120, 219, 319, 419, 519], -18, 594, 1146) + year(-18, 594) +
  `<path stroke="#aaa" stroke-width="3" stroke-dasharray="9 6" d="M6 544H1143M6 562H1143"/>` +
  line("150,60 200,72 260,105 330,135 400,160 470,185 540,195 620,195 700,197 760,198 830,210 920,238 1000,267 1060,295 1118,314", "#b81818") +
  line("8,145 60,155 110,145 180,131 250,148 340,170 430,198 510,228 570,248 620,262 670,255 740,232 800,236 880,250 950,262 1020,297 1080,340 1118,373", "#d0d040") +
  line("8,150 60,150 95,125 140,100 180,95 230,120 290,165 340,230 390,280 420,295 500,280 590,255 640,235 690,200 740,185 800,210 870,265 940,335 980,365 1050,395 1118,453", "#1a1ab0") +
  candles(close1, 26, 18, 6) +
  `<g transform="translate(-10 8)">${line(ema, "#18902a")}</g>` + line(ema, "#e8e8e8") +
  ["15,55 40,95", "190,70 205,150 230,210", "245,200 265,210 305,280", "410,210 465,250", "520,170 570,190", "680,103 715,115 748,155", "748,155 780,250 800,310", "835,320 870,345 915,355", "950,352 985,370 1015,420", "1035,420 1065,450 1115,535"].map((s) => line(s, "#a01616", "sar")).join("") +
  ["48,188 68,165", "108,105 130,95", "315,342 350,335 380,320 405,280", "472,335 500,305 530,240", "565,292 610,255 650,210 675,150", "790,378 830,362", "920,395 950,390", "1012,483 1035,480"].map((s) => line(s, "#128a1c", "sar")).join("") +
  `<path stroke="#e01616" stroke-width="5" d="M1117 540v56"/>` +
  `<path fill="#555" d="M62 120l13-34 15 34z"/><rect x="57" y="120" width="38" height="38" rx="5" fill="#20358c" stroke="#777" stroke-width="3"/><text x="67" y="148">E</text>` +
  labels(1247, [["6.00", 20], ["5.00", 120], ["4.00", 219], ["3.00", 319], ["2.00", 419]]) +
  `<rect class="tag" x="1201" y="498" width="56" height="28" rx="4"/>` + labels(1254, [["0.39", 511]]) +
  `<rect x="1143" y="528" width="28" height="50" fill="#777"/><text x="1149" y="549">A</text><text x="1149" y="571">A</text>` +
  `<text class="year" x="78" y="620">2018</text>` +
  [["Feb.01", 174], ["Apr.01", 347], ["May.01", 444], ["Jun.01", 541], ["Aug.01", 729], ["Sep.01", 827], ["Nov.01", 1017]].map(([t, x]) => `<text x="${x}" y="620">${t}</text>`).join("")
);

draw("vol1",
  grid(xs1, [65, 101, 139, 176, 212, 249], 43, 276, 1146) + year(43, 276) +
  bars("8,230 30,190 50,215 110,200 170,210 190,185 240,185 270,200 330,220 400,225 450,210 475,190 500,190 560,210 620,215 660,220 700,245 740,235 748,160 780,190 800,225 840,225 880,225 920,220 960,235 1000,210 1050,215 1118,240", "35,195 111,180,g 176,162 247,124 253,165 305,150 319,193,g 376,197,g 403,198,g 412,165 446,186 461,185,g 464,84,g 474,138,g 487,175 496,152,g 508,190 515,177 522,190,g 620,202,g 607,212 712,217 746,45 752,62 748,155 758,165 782,160,g 785,165,g 788,195,g 843,195 905,182 922,192,g 1006,180 1042,124 1117,60", 276, 1115, 6) +
  labels(1247, [["10.00M", 103], ["6.00M", 178], ["2.00M", 251]])
);

let rsi1 = "6,108 15,85 25,105 35,135 50,75 65,45 75,60 85,28 100,65 113,30 128,75 150,95 160,110 170,145 180,174 190,195 205,210 218,203 232,218 242,128 250,170 257,187 265,160 280,167 292,148 305,168 315,170 320,125 327,105 340,130 355,120 362,85 375,40 390,45 405,25 413,110 420,135 440,130 450,105 458,80 463,128 470,70 480,45 490,55 500,45 508,22 520,90 525,110 540,65 553,90 570,45 580,55 588,95 605,70 620,30 632,60 645,45 655,5 668,35 680,65 700,80 712,120 722,95 742,95 745,160 755,205 780,225 795,165 800,140 820,160 835,160 845,190 855,150 875,125 890,130 910,175 920,120 935,145 950,115 965,110 975,150 990,195 1005,210 1015,170 1035,180 1050,205 1075,230 1095,225 1112,185 1118,220";
draw("rsi1",
  grid(xs1, [55, 94, 133, 212], 0, 232, 1146) + year(0, 232) +
  `<path stroke="#8a2630" stroke-width="3" d="M6 13H1146"/><path stroke="#2f7a2f" stroke-width="3" d="M6 174H1146"/>` +
  area("under1", rsi1, 174, "#109818", 174, 234) + line(rsi1, "#187c80") +
  labels(1247, [["60.0%", 55], ["40.0%", 133], ["20.0%", 212]])
);

let hist = pts("8,92 25,100 40,85 90,70 120,75 150,82 175,110 195,138 220,120 240,90 260,88 290,70 330,60 385,50 405,70 415,85 430,100 455,90 475,65 495,55 515,68 530,90 560,80 590,88 630,82 660,66 690,90 720,105 740,95 750,135 770,143 785,125 800,88 820,72 880,62 920,80 960,75 1010,100 1060,97 1095,88 1115,75");
let histBars = "";
for (let x = 8; x < 1116; x += 6) {
  histBars += `<path stroke="#25b8b8" stroke-width="4" d="M${x} 82V${at(hist, x)}"/>`;
}
draw("macd1",
  grid(xs1, [27, 140, 197], 0, 230, 1146) + year(0, 230) +
  `<path stroke="#999" stroke-width="2" d="M6 82H1146"/>` + histBars +
  line("8,45 35,90 55,65 70,35 90,25 100,35 117,20 130,35 145,60 160,80 175,125 185,165 195,195 205,210 230,220 245,198 258,212 280,198 300,178 310,180 330,140 345,130 365,95 385,70 405,50 420,75 440,95 460,100 475,90 490,60 510,28 525,55 545,55 575,35 600,55 615,52 635,35 655,12 672,5 690,22 710,58 740,85 755,150 770,210 785,232 800,210 820,185 850,170 880,140 900,120 910,130 940,115 965,105 990,135 1010,152 1030,150 1060,175 1085,184 1118,170", "#8070d0") +
  line("8,40 40,80 70,55 100,38 130,30 155,45 175,68 195,130 215,175 240,200 265,207 290,202 320,180 350,148 380,110 400,72 415,68 450,95 475,100 500,70 520,45 560,52 600,50 630,50 665,22 685,17 710,38 748,78 775,165 800,205 830,195 870,165 900,133 930,130 960,112 985,112 1020,140 1060,165 1090,178 1118,177", "#e08428") +
  labels(1247, [["0.00", 84], ["-0.20", 141], ["-0.40", 199]])
);

let knob = (x) => `<path fill="none" stroke="#999" stroke-width="3" d="M${x + 18} 0v9"/><rect x="${x}" y="8" width="19" height="16" fill="#888"/><path stroke="#ddd" stroke-width="2" d="M${x + 4} 14h11M${x + 4} 19h11"/>`;
draw("over1", `<path fill="#202020" d="M6 24V16L68 16 74 4 110 8 150 16 230 21 260 24z"/>` +
  `<path stroke="#2a2a2a" stroke-width="3" d="M668 0v24M818 0v24M973 0v24M1132 0v24"/>` + knob(629) + knob(1238));

let xs2 = [65, 189, 307, 431, 553, 677, 800, 922, 1047];
draw("price2",
  grid(xs2, [-60, 37, 133, 229, 325, 421, 517, 613], -100, 632, 1110, "", "solid") +
  line("8,130 20,210 45,290 70,340 100,375 115,450 138,535 165,515 190,440 220,465 270,490 330,495 400,505 480,500 560,470 610,475 680,450 740,445 810,420 850,370 885,380 940,370 985,335 1010,295 1050,295 1085,325", "#15159c") +
  candles("8,245 15,350 35,290 45,355 60,365 80,395 100,365 108,480 118,610 125,560 135,590 150,520 155,540 160,480 170,490 178,430 190,395 200,430 215,490 225,470 240,495 270,475 290,515 305,500 325,480 350,515 370,510 400,510 420,500 438,485 448,520 470,495 490,485 510,500", 14, 10, 4) +
  candles("510,500 525,470 545,460 570,465 582,490 600,475 640,470 670,460 685,430 700,445 740,445 780,425 800,430 820,400 835,350 860,345 870,370 880,405 900,385 920,375 930,355 940,370 960,350 980,345 985,300 995,245 1010,295 1030,290 1040,270 1055,300 1070,310 1083,350", 9, 5, 2) +
  `<path stroke="#ddd" stroke-width="3" d="M268 473h12M390 512h14M450 520h10M548 462h12M592 476h14M640 469h12M700 439h12M894 383h12M920 352h12M1024 287h12M1042 303h24"/>` +
  line("10,-104 40,0 65,100 100,235 130,350 158,425 210,455 260,490 310,475 345,490 380,500 480,505 560,490 640,475 740,460 820,435 880,405 980,370 1040,335 1065,318 1085,315", "#b81414") +
  `<path stroke="#999" stroke-width="3" d="M525 513L1110 340"/><path fill="#999" d="M438 515h10v10h-10zM520 508h10v10h-10zM1042 353h10v10h-10z"/>` +
  labels(1213, [["0.60", -60], ["0.55", 37], ["0.50", 133], ["0.45", 229], ["0.40", 325], ["0.35", 421], ["0.30", 517], ["0.25", 613]]) +
  `<rect class="tag" x="1167" y="327" width="56" height="26" rx="4"/>` + labels(1220, [["0.39", 339]]) +
  [["07:00 AM", 65], ["07:30 AM", 189], ["08:30 AM", 431], ["09:00 AM", 553], ["09:30 AM", 677], ["10:00 AM", 800], ["10:30 AM", 922], ["11:00 AM", 1047]].map(([t, x]) => `<text x="${x}" y="657">${t}</text>`).join("")
);

draw("vol2",
  grid(xs2, [55, 105, 155, 205, 255, 305], 42, 360, 1110, "solid", "solid") +
  bars("8,280 30,290 50,330 75,280 90,300 110,210 150,260 180,290 210,290 230,330 260,340 290,330 330,310 350,335 390,330 440,345 470,320 500,345 560,330 600,350 650,348 700,310 740,330 760,320 800,350 820,290 860,330 920,325 980,320 1000,310 1030,325 1060,345 1085,320", "20,180,g 27,178,g 31,208,g 43,240 63,217,g 75,272 100,236 105,200 112,112 117,92 125,132 129,146 133,46,g 141,195,g 153,96 157,146 175,132,g 179,197 187,240,g 191,195 211,272 281,270,g 285,243 293,258 301,265,g 320,210,g 326,234,g 330,276 339,286 425,265,g 448,92 453,86 476,292,g 531,286,g 568,297 695,297 752,240,g 785,305,g 811,286,g 838,210,g 862,270 922,302 994,183,g 999,286 1033,183,g 1069,243 1084,122,g", 360, 1085, 4) +
  labels(1213, [["250,000", 107], ["200,000", 157], ["150,000", 207], ["100,000", 257], ["50,000", 307]])
);

let rsi2 = "10,335 20,345 32,310 45,320 55,303 80,305 90,308 100,285 115,335 130,320 142,263 150,235 160,210 170,215 188,158 200,185 215,225 225,203 240,228 255,205 262,215 275,195 290,240 305,228 325,187 340,220 355,235 368,195 380,210 385,192 400,218 415,212 425,165 437,135 447,230 455,233 470,190 480,180 490,150 500,160 507,205 520,207 528,122 535,143 545,125 558,152 570,155 582,225 590,185 620,185 638,180 645,147 655,160 672,125 680,118 688,90 695,125 715,120 730,140 737,175 750,135 765,115 780,103 800,130 810,115 815,75 830,42 848,38 857,80 865,130 878,225 890,215 897,180 920,165 928,125 940,160 965,140 975,150 983,90 988,105 995,68 1005,110 1018,165 1035,140 1047,185 1060,175 1078,240 1085,248";
draw("rsi2",
  grid(xs2, [53, 88, 158, 193, 228, 298, 335], 36, 348, 1110, "", "solid") +
  area("under2", rsi2, 263, "#109818", 263, 351) + area("over70", rsi2, 123, "#a01018", 33, 123) +
  `<path stroke="#8a1c24" stroke-width="3" d="M6 123H1110"/><path stroke="#2f7a2f" stroke-width="3" d="M6 263H1110"/>` +
  line(rsi2, "#1c8488") +
  labels(1213, [["70.0%", 125], ["50.0%", 195], ["30.0%", 265], ["10.0%", 337]])
);
draw("over2", `<path fill="#222" stroke="#383838" stroke-width="2" d="M6 24V17L100 18 170 15 230 18 260 8 300 4 350 8 365 2 390 10 450 9 540 14 640 15 720 14 740 8 850 12 1085 13V24z"/>` + knob(1094) + knob(1203));

// price, ask size, ask broker, shade
let asks = [["0.48", 300, "CTDL CDRG", 1], ["0.47", 2900, "WSEA WCHV WABC", 1], ["0.46", "", "", 1], ["0.45", 200, "SUFI SSUS", 1], ["0.44", 100, "ETMM", 2], ["0.43", "", "", 2], ["0.42", 100, "SGAS", 3], ["0.41", 100, "IMCC", 3], ["0.40", 200, "NSDQ", 4]];
let bids = [["0.39", 1100, "NSDQ", 4], ["0.38", "", "", 4], ["0.37", 200, "SGAS IMCC", 3], ["0.36", "", "", 3], ["0.35", "", "", 3], ["0.34", 100, "ETMM", 2], ["0.33", 100, "SSUS", 2], ["0.32", 400, "CTDL CDRG SUFI", 2]];
let day = (size) => (size ? "06 DEC 18 ..." : "");
document.getElementById("ladder").innerHTML =
  asks.map(([p, s, b, d]) => `<tr><td></td><td></td><td></td><td class="d${d}">${p}</td><td class="d${d}">${s}</td><td class="d${d}">${day(s)}</td><td class="d${d}">${b}</td></tr>`).join("") +
  bids.map(([p, s, b, d]) => `<tr><td class="d${d}">${b}</td><td class="d${d}">${day(s)}</td><td class="d${d}">${s}</td><td class="d${d}">${p}</td><td></td><td></td><td></td></tr>`).join("");

let watch = [
  ["SNSS", "0.43", "-0.06", "-11.71%", "0.43", "0.43", "384,365"],
  ["SN", "0.39", "-0.32", "-44.79%", "0.39", "0.39", "12,030,9..."],
  ["SNNA", "5.34", "-0.46", "-7.93%", "5.26", "5.33", "206,672"],
  ["HX", "2.18", "-0.82", "-27.42%", "2.17", "2.18", "711,824"],
  ["BRQS", "4.01", "0.00", "+0.06%", "4.01", "4.15", "7,207"],
  ["ARLO", "9.04", "+0.24", "+2.73%", "9.04", "9.09", "280,804"],
  ["TNXP", "3.40", "-0.81", "-19.31%", "3.40", "3.41", "365,420"],
  ["APHA", "4.70", "+0.19", "+4.21%", "4.69", "4.71", "21,391,0..."],
  ["OCUL", "6.04", "+0.43", "+7.65%", "6.03", "6.05", "658,547"],
  ["BKS", "6.79", "-0.15", "-2.16%", "6.79", "6.80", "817,375"],
  ["ACB", "5.17", "-0.23", "-4.32%", "5.16", "5.17", "17,243,3..."],
];
document.getElementById("watch").innerHTML = watch.map(([t, p, c, g, b, a, v]) => {
  let dir = g[0] == "+" ? "up" : "down";
  let dim = t == "APHA" || t == "BKS" ? "dim" : "";
  return `<tr class="${t == "SN" ? "cur" : ""}"><td class="${dir}">${t}</td><td>${use("flag-sm")}</td><td>R</td><td class="${t == "APHA" ? "dim" : ""}">${p}</td><td class="${dir}">${c}</td><td class="${dir}">${g}</td><td class="${dim}">${b}</td><td class="${dim}">${a}</td><td class="${t == "APHA" ? "up" : ""}">${v}</td><td></td></tr>`;
}).join("");
```
